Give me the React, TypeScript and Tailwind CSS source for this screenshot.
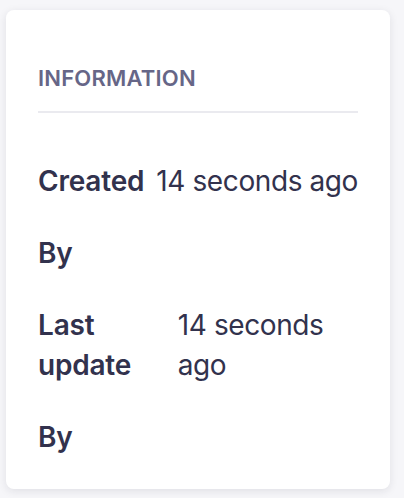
export default function App() {
  const rows = [
    { label: "Created", value: "14 seconds ago" },
    { label: "By", value: "" },
    { label: "Last update", value: "14 seconds ago" },
    { label: "By", value: "" },
  ];

  return (
    <div className="min-h-[498px] bg-[#f6f6f9] pt-[10px] pl-[6px] font-['Inter','Noto_Sans',sans-serif]">
      <aside className="w-[384px] rounded-[8px] bg-white px-[32px] pt-[52px] pb-[32px] shadow-[0_2px_8px_rgba(33,33,52,0.1)]">
        <h2 className="text-[22px] leading-[32px] font-semibold uppercase tracking-[0.2px] text-[#666687]">
          Information
        </h2>
        <hr className="mt-[17px] h-[2px] border-0 bg-[#eaeaef]" />
        <dl className="mt-[48px] flex flex-col gap-[32px] text-[28px] leading-[40px] text-[#32324d]">
          {rows.map((r, i) => (
            <div key={i} className="flex justify-between">
              <dt className="font-semibold tracking-[-0.2px]">{r.label}</dt>
              <dd className="tracking-[-0.4px]">{r.value}</dd>
            </div>
          ))}
        </dl>
      </aside>
    </div>
  );
}
